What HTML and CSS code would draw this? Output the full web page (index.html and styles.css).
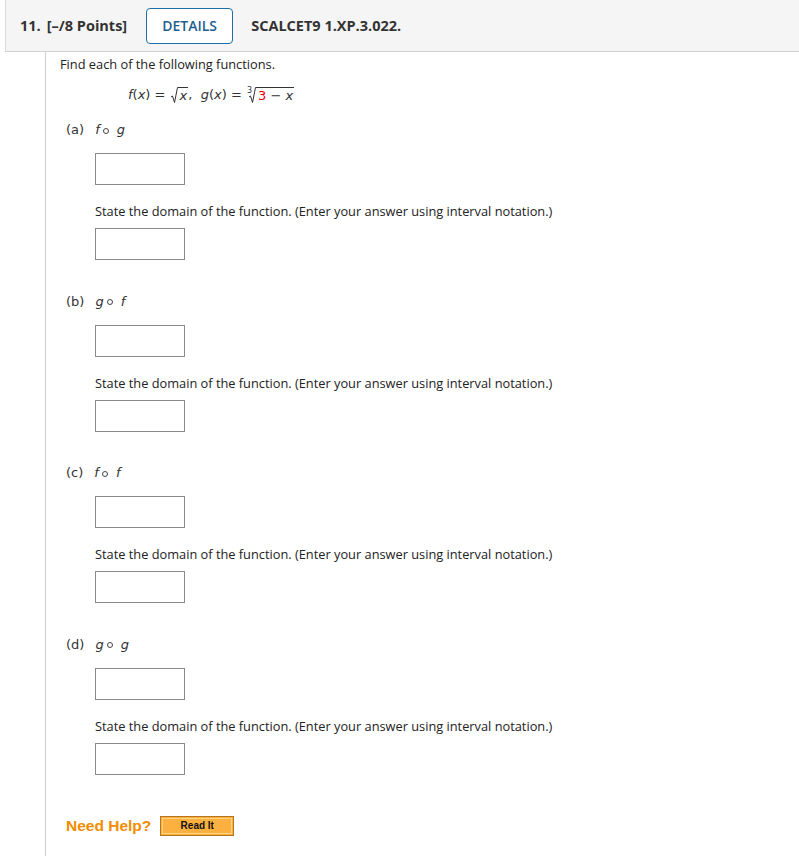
FILE: index.html
```html
<!DOCTYPE html>
<html>
<head>
<meta charset="utf-8">
<link rel="stylesheet" href="styles.css">
</head>
<body>
<div class="header">
  <span class="qnum">11.</span>
  <span class="points">[–/8 Points]</span>
  <span class="details">DETAILS</span>
  <span class="code">SCALCET9 1.XP.3.022.</span>
</div>
<div class="content">
  <p class="intro">Find each of the following functions.</p>
  <div class="formula">
    <span class="it">f</span>(<span class="it">x</span>) = <span class="radical"><svg class="rsign" width="7" height="17" viewBox="0 0 7 17"><path d="M0 10 L1.5 9 L3.5 15.5 L6.5 0.5 L7 0.5" fill="none" stroke="#333" stroke-width="1"/></svg><span class="rad-body"><span class="it">x</span></span></span>,&nbsp;&nbsp;<span class="it">g</span>(<span class="it">x</span>) = <span class="radical cube"><span class="index">3</span><svg class="rsign" width="7" height="17" viewBox="0 0 7 17"><path d="M0 10 L1.5 9 L3.5 15.5 L6.5 0.5 L7 0.5" fill="none" stroke="#333" stroke-width="1"/></svg><span class="rad-body"><span class="red">3</span> − <span class="it">x</span></span></span>
  </div>

  <div class="part">
    <div class="label"><span class="pl">(a)</span><span class="it">f</span><span class="comp"></span><span class="it">g</span></div>
    <div class="answer"></div>
    <p class="domain">State the domain of the function. (Enter your answer using interval notation.)</p>
    <div class="answer small"></div>
  </div>
  <div class="part">
    <div class="label"><span class="pl">(b)</span><span class="it">g</span><span class="comp"></span><span class="it">f</span></div>
    <div class="answer"></div>
    <p class="domain">State the domain of the function. (Enter your answer using interval notation.)</p>
    <div class="answer small"></div>
  </div>
  <div class="part">
    <div class="label"><span class="pl">(c)</span><span class="it">f</span><span class="comp"></span><span class="it">f</span></div>
    <div class="answer"></div>
    <p class="domain">State the domain of the function. (Enter your answer using interval notation.)</p>
    <div class="answer small"></div>
  </div>
  <div class="part">
    <div class="label"><span class="pl">(d)</span><span class="it">g</span><span class="comp"></span><span class="it">g</span></div>
    <div class="answer"></div>
    <p class="domain">State the domain of the function. (Enter your answer using interval notation.)</p>
    <div class="answer small"></div>
  </div>

  <div class="help">
    <span class="need">Need Help?</span>
    <span class="readit"><span class="readit-inner">Read It</span></span>
  </div>
</div>
</body>
</html>
```
FILE: styles.css
```css
html, body {
  margin: 0;
  padding: 0;
  background: #fff;
}
body {
  font-family: "Open Sans", "DejaVu Sans", sans-serif;
  font-size: 12.8px;
  color: #222;
  width: 799px;
  height: 856px;
  overflow: hidden;
}
.header {
  margin-left: 5px;
  height: 51px;
  background: #f5f5f5;
  border-left: 1px solid #dcdcdc;
  border-bottom: 1px solid #d2d2d2;
  display: flex;
  align-items: center;
  padding-left: 14px;
  font-weight: bold;
  font-size: 14.5px;
  color: #333;
}
.qnum { margin-right: 6px; }
.points { margin-right: 19px; }
.details {
  display: inline-flex;
  align-items: center;
  justify-content: center;
  box-sizing: border-box;
  width: 87px;
  height: 36px;
  border: 1px solid #1f6ea6;
  border-radius: 4px;
  background: #fff;
  color: #1f5f8f;
  font-weight: 600;
  font-size: 14px;
  margin-right: 18px;
}
.code { color: #333; }

.content {
  margin-left: 45px;
  border-left: 1px solid #cfcfcf;
  padding-left: 14px;
  padding-top: 3px;
  height: 804px;
  box-sizing: border-box;
}
p { margin: 0; }
.intro { line-height: 18px; }
.formula {
  margin-top: 11px;
  margin-left: 68px;
  height: 22px;
  line-height: 22px;
  color: #333;
  white-space: nowrap;
  font-family: "DejaVu Sans", Verdana, sans-serif;
  font-size: 13px;
}
.it { font-style: italic; }
.red { color: #e8000b; }
.radical {
  display: inline-flex;
  align-items: flex-end;
  position: relative;
  vertical-align: bottom;
  height: 20px;
  margin-left: 1px;
}
.radical.cube { padding-left: 2px; }
.rsign { display: block; margin-bottom: 2px; }
.rad-body {
  border-top: 1px solid #333;
  line-height: 16px;
  padding: 0 1px 0 2px;
  margin-bottom: 2px;
}
.index {
  position: absolute;
  left: 0;
  top: 1px;
  font-size: 8px;
  line-height: 8px;
}

.part { margin-top: 15px; }
.part + .part { margin-top: 32.67px; }
.label {
  margin-left: 6px;
  line-height: 18px;
  color: #333;
  font-family: "DejaVu Sans", Verdana, sans-serif;
  font-size: 13px;
  display: flex;
  align-items: center;
}
.pl { margin-right: 11px; }
.comp {
  display: inline-block;
  width: 6px;
  height: 6px;
  box-sizing: border-box;
  border: 1px solid #444;
  border-radius: 50%;
  margin: 1px 8px 0 3px;
}
.answer {
  margin-left: 35px;
  margin-top: 14px;
  width: 90px;
  height: 32px;
  box-sizing: border-box;
  border: 1px solid #8a8a8a;
  background: #fff;
}
.domain {
  margin-left: 35px;
  margin-top: 17px;
  line-height: 18px;
}
.answer.small { margin-top: 8px; }

.help {
  margin-top: 41px;
  margin-left: 6px;
  display: flex;
  align-items: center;
  height: 20px;
}
.need {
  font-family: "Liberation Sans", Arial, sans-serif;
  font-weight: bold;
  font-size: 15.5px;
  color: #f28c00;
  margin-right: 9px;
}
.readit {
  display: inline-block;
  box-sizing: border-box;
  width: 74px;
  height: 20px;
  border: 1px solid #b8741c;
  background: #fbb040;
  padding: 1px;
}
.readit-inner {
  display: flex;
  align-items: center;
  justify-content: center;
  height: 100%;
  border: 1px solid #ffd27d;
  box-sizing: border-box;
  font-family: "Liberation Sans", Arial, sans-serif;
  font-weight: bold;
  font-size: 10px;
  color: #111;
}
```
